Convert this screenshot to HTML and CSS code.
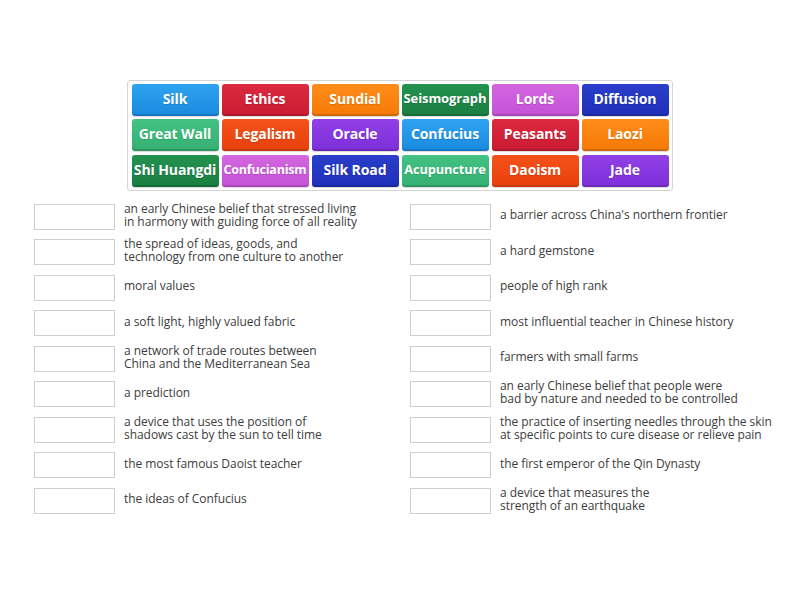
FILE: index.html
```html
<!DOCTYPE html>
<html>
<head>
<meta charset="utf-8">
<link rel="stylesheet" href="styles.css">
</head>
<body>
<div class="page">
  <div class="bank">
    <div class="tile c-blue">Silk</div>
    <div class="tile c-crimson">Ethics</div>
    <div class="tile c-orange">Sundial</div>
    <div class="tile c-dgreen fs13">Seismograph</div>
    <div class="tile c-pink">Lords</div>
    <div class="tile c-dblue">Diffusion</div>
    <div class="tile c-green">Great Wall</div>
    <div class="tile c-redor">Legalism</div>
    <div class="tile c-purple">Oracle</div>
    <div class="tile c-blue">Confucius</div>
    <div class="tile c-crimson">Peasants</div>
    <div class="tile c-orange">Laozi</div>
    <div class="tile c-dgreen">Shi Huangdi</div>
    <div class="tile c-pink fs12">Confucianism</div>
    <div class="tile c-dblue">Silk Road</div>
    <div class="tile c-green fs125">Acupuncture</div>
    <div class="tile c-redor">Daoism</div>
    <div class="tile c-purple">Jade</div>
  </div>
  <div class="rows">
    <div class="row"><div class="slot"></div><div class="desc">an early Chinese belief that stressed living<br>in harmony with guiding force of all reality</div></div>
    <div class="row"><div class="slot"></div><div class="desc">a barrier across China's northern frontier</div></div>
    <div class="row"><div class="slot"></div><div class="desc">the spread of ideas, goods, and<br>technology from one culture to another</div></div>
    <div class="row"><div class="slot"></div><div class="desc">a hard gemstone</div></div>
    <div class="row"><div class="slot"></div><div class="desc">moral values</div></div>
    <div class="row"><div class="slot"></div><div class="desc">people of high rank</div></div>
    <div class="row"><div class="slot"></div><div class="desc">a soft light, highly valued fabric</div></div>
    <div class="row"><div class="slot"></div><div class="desc">most influential teacher in Chinese history</div></div>
    <div class="row"><div class="slot"></div><div class="desc">a network of trade routes between<br>China and the Mediterranean Sea</div></div>
    <div class="row"><div class="slot"></div><div class="desc">farmers with small farms</div></div>
    <div class="row"><div class="slot"></div><div class="desc">a prediction</div></div>
    <div class="row"><div class="slot"></div><div class="desc">an early Chinese belief that people were<br>bad by nature and needed to be controlled</div></div>
    <div class="row"><div class="slot"></div><div class="desc">a device that uses the position of<br>shadows cast by the sun to tell time</div></div>
    <div class="row"><div class="slot"></div><div class="desc">the practice of inserting needles through the skin<br>at specific points to cure disease or relieve pain</div></div>
    <div class="row"><div class="slot"></div><div class="desc">the most famous Daoist teacher</div></div>
    <div class="row"><div class="slot"></div><div class="desc">the first emperor of the Qin Dynasty</div></div>
    <div class="row"><div class="slot"></div><div class="desc">the ideas of Confucius</div></div>
    <div class="row"><div class="slot"></div><div class="desc">a device that measures the<br>strength of an earthquake</div></div>
  </div>
</div>
</body>
</html>
```
FILE: styles.css
```css
* { box-sizing: border-box; }
html, body { margin: 0; padding: 0; background: #fff; }
body { font-family: "Open Sans", "Liberation Sans", sans-serif; }
.page { width: 800px; height: 600px; padding-top: 80px; }
.bank {
  width: 546px;
  margin: 0 auto;
  border: 1px solid #d4d4d4;
  border-radius: 3px;
  padding: 2.5px 2.5px 3px 3.5px;
  display: grid;
  grid-template-columns: repeat(6, 87px);
  grid-auto-rows: 32px;
  column-gap: 3px;
  row-gap: 3.7px;
}
.tile {
  border-radius: 3px;
  color: #fff;
  font-weight: 700;
  font-size: 14px;
  display: flex;
  align-items: center;
  justify-content: center;
  padding-bottom: 3px;
  white-space: nowrap;
  letter-spacing: -0.1px;
  box-shadow: inset 0 -2px 0 rgba(0,0,0,0.15), 0 1px 1px rgba(0,0,0,0.15);
  text-shadow: 0 1px 1px rgba(0,0,0,0.15);
}
.fs13 { font-size: 13px; }
.fs125 { font-size: 12.8px; }
.fs12 { font-size: 12.5px; letter-spacing: -0.2px; }
.c-blue { background: linear-gradient(#2fa3f0, #1a8ae0); }
.c-crimson { background: linear-gradient(#dc2a40, #c91b32); }
.c-orange { background: linear-gradient(#ff8c1a, #f57a05); }
.c-dgreen { background: linear-gradient(#23924f, #1a7e42); }
.c-pink { background: linear-gradient(#d466e0, #c452d6); }
.c-dblue { background: linear-gradient(#2a3ecb, #1f30b8); }
.c-green { background: linear-gradient(#43c283, #35b072); }
.c-redor { background: linear-gradient(#f5521a, #e8400b); }
.c-purple { background: linear-gradient(#9140e6, #7e2fd8); }
.rows {
  margin-top: 13px;
  padding-left: 34px;
  display: grid;
  grid-template-columns: 376px 376px;
  grid-auto-rows: 26px;
  row-gap: 9.5px;
}
.row { display: flex; align-items: center; }
.slot {
  flex: none;
  width: 81px;
  height: 26px;
  border: 1px solid #cfcfcf;
  background: #fff;
}
.desc {
  margin-left: 9px;
  font-size: 12px;
  line-height: 13px;
  letter-spacing: -0.05px;
  color: #3c3c3c;
  white-space: nowrap;
  margin-top: -4px;
}
```
